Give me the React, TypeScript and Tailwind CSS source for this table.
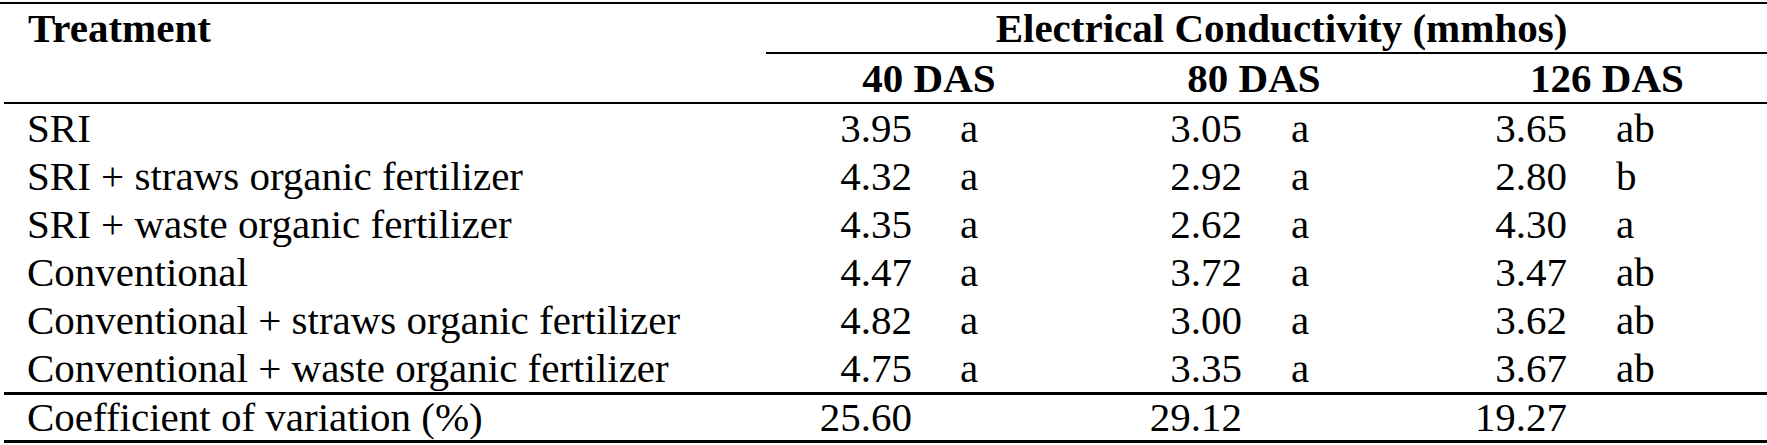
const ROWS = [
  { name: "SRI", v: [["3.95", "a"], ["3.05", "a"], ["3.65", "ab"]] },
  { name: "SRI + straws organic fertilizer", v: [["4.32", "a"], ["2.92", "a"], ["2.80", "b"]] },
  { name: "SRI + waste organic fertilizer", v: [["4.35", "a"], ["2.62", "a"], ["4.30", "a"]] },
  { name: "Conventional", v: [["4.47", "a"], ["3.72", "a"], ["3.47", "ab"]] },
  { name: "Conventional + straws organic fertilizer", v: [["4.82", "a"], ["3.00", "a"], ["3.62", "ab"]] },
  { name: "Conventional + waste organic fertilizer", v: [["4.75", "a"], ["3.35", "a"], ["3.67", "ab"]] },
];

// right padding of number cells / left padding of letter cells, per DAS group
const NUM_PAD = ["pr-[20px]", "pr-[20px]", "pr-[27px]"];
const LET_PAD = ["pl-[28px]", "pl-[29px]", "pl-[22px]"];

export default function App() {
  return (
    <div className="w-[1767px] h-[445px] bg-white pt-[2px] text-black [font-family:'Liberation_Serif','Times_New_Roman',serif] text-[41px] leading-[48px]">
      <div className="grid grid-cols-[766px_166px_160px_170px_154px_178px_173px] border-t-2 border-black">
        {/* header */}
        <div className="row-span-2 ml-[4px] border-b-2 border-black pl-[24px] font-bold">Treatment</div>
        <div className="col-span-6 h-[50px] border-b-2 border-black pl-[30px] text-center font-bold">
          Electrical Conductivity (mmhos)
        </div>
        <div className="col-span-2 h-[50px] border-b-2 border-black text-center font-bold">40 DAS</div>
        <div className="col-span-2 h-[50px] border-b-2 border-black text-center font-bold">80 DAS</div>
        <div className="col-span-2 h-[50px] border-b-2 border-black pl-[31px] text-center font-bold">126 DAS</div>

        {/* body */}
        {ROWS.map((r) => (
          <div key={r.name} className="contents">
            <div className="h-[48px] pl-[27px] whitespace-nowrap">{r.name}</div>
            {r.v.map(([num, letter], i) => (
              <div key={i} className="contents">
                <div className={`h-[48px] text-right ${NUM_PAD[i]}`}>{num}</div>
                <div className={`h-[48px] ${LET_PAD[i]}`}>{letter}</div>
              </div>
            ))}
          </div>
        ))}

        {/* coefficient of variation */}
        <div className="h-[51px] ml-[4px] border-t-[3px] border-b-[3px] border-black pl-[23px] leading-[45px]">
          Coefficient of variation (%)
        </div>
        {["25.60", "29.12", "19.27"].map((cv, i) => (
          <div key={cv} className="contents">
            <div className={`h-[51px] border-t-[3px] border-b-[3px] border-black text-right leading-[45px] ${NUM_PAD[i]}`}>
              {cv}
            </div>
            <div className="h-[51px] border-t-[3px] border-b-[3px] border-black" />
          </div>
        ))}
      </div>
    </div>
  );
}
